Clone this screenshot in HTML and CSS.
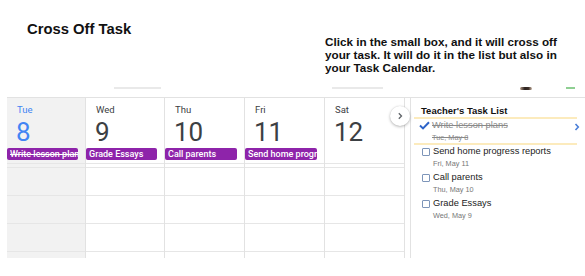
FILE: index.html
```html
<!DOCTYPE html>
<html>
<head>
<meta charset="utf-8">
<link rel="stylesheet" href="styles.css">
</head>
<body>
<header class="intro">
  <h1 class="title">Cross Off Task</h1>
  <p class="note">Click in the small box, and it will cross off<br>your task. It will do it in the list but also in<br>your Task Calendar.</p>
</header>
<div class="deco">
  <span class="frag frag-a"></span>
  <span class="frag frag-b"></span>
  <span class="frag frag-dark"></span>
  <span class="frag frag-green"></span>
</div>
<main class="board">
  <section class="calendar">
    <div class="day today">
      <div class="day-head">
        <div class="dow">Tue</div>
        <div class="num">8</div>
        <div class="chip done">Write lesson plans</div>
      </div>
      <div class="strip"></div>
      <div class="slot"></div><div class="slot"></div><div class="slot"></div><div class="slot"></div>
    </div>
    <div class="day">
      <div class="day-head">
        <div class="dow">Wed</div>
        <div class="num">9</div>
        <div class="chip">Grade Essays</div>
      </div>
      <div class="strip"></div>
      <div class="slot"></div><div class="slot"></div><div class="slot"></div><div class="slot"></div>
    </div>
    <div class="day wide">
      <div class="day-head">
        <div class="dow">Thu</div>
        <div class="num">10</div>
        <div class="chip">Call parents</div>
      </div>
      <div class="strip"></div>
      <div class="slot"></div><div class="slot"></div><div class="slot"></div><div class="slot"></div>
    </div>
    <div class="day wide">
      <div class="day-head">
        <div class="dow">Fri</div>
        <div class="num">11</div>
        <div class="chip">Send home progress reports</div>
      </div>
      <div class="strip"></div>
      <div class="slot"></div><div class="slot"></div><div class="slot"></div><div class="slot"></div>
    </div>
    <div class="day wide">
      <div class="day-head">
        <div class="dow">Sat</div>
        <div class="num">12</div>
      </div>
      <div class="strip"></div>
      <div class="slot"></div><div class="slot"></div><div class="slot"></div><div class="slot"></div>
    </div>
  </section>
  <button class="fold" aria-label="Expand">
    <svg width="8" height="8" viewBox="0 0 8 8"><path d="M2.8 1.3 L5.5 4 L2.8 6.7" fill="none" stroke="#5f6368" stroke-width="1.3"/></svg>
  </button>
  <aside class="tasks">
    <h2 class="tasks-title">Teacher's Task List</h2>
    <ul class="task-list">
      <li class="task selected">
        <svg class="check" width="11" height="9" viewBox="0 0 11 9"><path d="M1 4.6 L4 7.4 L10 1.2" fill="none" stroke="#2d63c8" stroke-width="2"/></svg>
        <div class="task-body">
          <div class="task-name">Write lesson plans</div>
          <div class="task-date">Tue, May 8</div>
        </div>
        <svg class="go" width="6" height="8" viewBox="0 0 6 8"><path d="M1.5 1 L4.3 4 L1.5 7" fill="none" stroke="#4a7fd8" stroke-width="1.6"/></svg>
      </li>
      <li class="task">
        <span class="box"></span>
        <div class="task-body">
          <div class="task-name">Send home progress reports</div>
          <div class="task-date">Fri, May 11</div>
        </div>
      </li>
      <li class="task">
        <span class="box"></span>
        <div class="task-body">
          <div class="task-name">Call parents</div>
          <div class="task-date">Thu, May 10</div>
        </div>
      </li>
      <li class="task">
        <span class="box"></span>
        <div class="task-body">
          <div class="task-name">Grade Essays</div>
          <div class="task-date">Wed, May 9</div>
        </div>
      </li>
    </ul>
  </aside>
</main>
</body>
</html>
```
FILE: styles.css
```css
* { box-sizing: border-box; }
html, body {
  margin: 0;
  padding: 0;
  background: #fff;
}
body {
  width: 585px;
  height: 276px;
  overflow: hidden;
  font-family: "Liberation Sans", Arial, sans-serif;
}

.intro {
  display: flex;
  height: 86px;
}
.title {
  width: 325px;
  margin: 0;
  padding: 21px 0 0 27px;
  font-size: 14.8px;
  line-height: 17px;
  font-weight: bold;
  color: #111;
}
.note {
  margin: 0;
  padding-top: 35px;
  font-size: 11.7px;
  line-height: 13px;
  font-weight: bold;
  color: #111;
}

.deco {
  display: flex;
  align-items: flex-start;
  height: 11px;
  padding-top: 1px;
}
.frag { display: block; height: 2px; }
.frag-a { margin-left: 114px; width: 47px; background: #e9e9e9; }
.frag-b { margin-left: 171px; width: 51px; background: #e9e9e9; }
.frag-dark {
  margin-left: 137px;
  width: 12px;
  height: 3px;
  border-radius: 2px;
  background: linear-gradient(90deg, #b59a86, #2a2220 40%, #3b2d26 70%, #c7b3a3);
}
.frag-green { margin-left: 34px; width: 9px; background: #8fcf92; }

.board {
  position: relative;
  display: flex;
  height: 161px;
  margin-left: 7px;
  border-top: 1px solid #e2e2e2;
  overflow: hidden;
  font-family: Roboto, "Liberation Sans", sans-serif;
}

.calendar {
  display: flex;
  border-right: 1px solid #e2e2e2;
}
.day {
  width: 79px;
  border-left: 1px solid #e2e2e2;
}
.day.today {
  width: 78px;
  border-left: 0;
  background: #f2f2f2;
}
.day.wide { width: 80px; }

.day-head {
  height: 66px;
  padding-top: 6px;
  border-bottom: 1px solid #e6e6e6;
}
.dow {
  padding-left: 10px;
  font-size: 9.5px;
  line-height: 12px;
  color: #3c4043;
}
.num {
  margin-top: 2px;
  padding-left: 9px;
  font-size: 26px;
  line-height: 28px;
  color: #3c4043;
}
.today .dow, .today .num { color: #4285f4; }

.chip {
  margin: 2px 7px 0 0;
  height: 12px;
  padding: 0 3px;
  border-radius: 2px;
  background: #8e24aa;
  color: #fff;
  font-size: 9px;
  font-weight: 500;
  line-height: 12px;
  white-space: nowrap;
  overflow: hidden;
}
.chip.done { text-decoration: line-through; }

.strip {
  height: 4px;
  border-bottom: 1px solid #e6e6e6;
}
.slot {
  height: 28px;
  border-bottom: 1px solid #e6e6e6;
}

.fold {
  position: absolute;
  left: 383px;
  top: 8px;
  width: 20px;
  height: 20px;
  padding: 0;
  border: 0;
  border-radius: 50%;
  background: #fff;
  box-shadow: 0 1px 3px rgba(0,0,0,0.28), 0 0 1px rgba(0,0,0,0.15);
  display: flex;
  align-items: center;
  justify-content: center;
}
.fold svg { display: block; }

.tasks {
  flex: 1;
  margin-left: 5px;
  border-left: 1px solid #e2e2e2;
  padding-top: 7px;
  font-family: "Liberation Sans", Arial, sans-serif;
}
.tasks-title {
  margin: 0 0 1px;
  padding-left: 10px;
  font-size: 9.5px;
  line-height: 11px;
  font-weight: bold;
  color: #111;
}
.task-list {
  list-style: none;
  margin: 0;
  padding: 0;
}
.task {
  position: relative;
  display: flex;
  align-items: flex-start;
  margin: 0 8px 0 3px;
  padding: 1px 0 2px 8px;
}
.task.selected {
  border-top: 2px solid #fcebbd;
  border-bottom: 2px solid #fcebbd;
  padding: 1px 0 0 5px;
}
.box {
  width: 8px;
  height: 8px;
  margin: 2px 3px 0 0;
  border: 1px solid #7d95b9;
  border-radius: 1px;
  background: #fff;
  flex: none;
}
.check {
  flex: none;
  margin: 1px 2px 0 0;
}
.task-name {
  font-size: 9.3px;
  line-height: 11px;
  color: #222;
  white-space: nowrap;
}
.task-date {
  margin-top: 2px;
  font-size: 7.3px;
  line-height: 10px;
  color: #777;
}
.selected .task-name {
  color: #8a8a8a;
  text-decoration: line-through;
}
.selected .task-date {
  color: #8a8a8a;
  text-decoration: line-through;
}
.go {
  position: absolute;
  right: -3px;
  top: 4px;
}
```
